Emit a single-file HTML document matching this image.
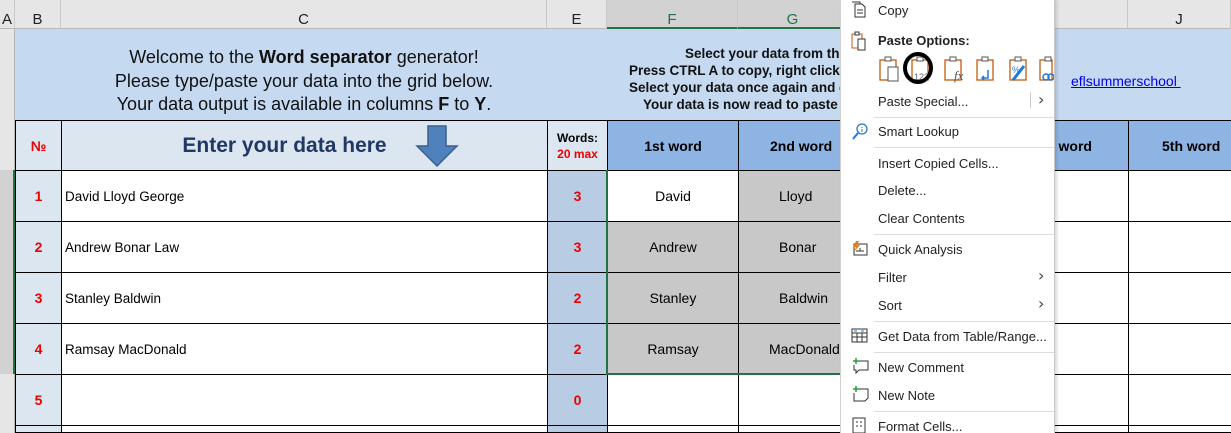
<!DOCTYPE html>
<html><head><style>
*{margin:0;padding:0;box-sizing:border-box}
html,body{width:1231px;height:433px;overflow:hidden}
body{background:#fff;font-family:"Liberation Sans",Arial,sans-serif;position:relative}
.a{position:absolute}
.hdr{background:#e6e6e6;color:#222;font-size:15px;text-align:center;top:0;height:29px;line-height:40px;border-right:1px solid #c8c8c8;border-bottom:1px solid #b8b8b8}
.c{position:absolute;border:1px solid #000;display:flex;align-items:center;justify-content:center}
.red{color:#e00;font-weight:bold;font-size:14px}
.nm{font-family:"Liberation Sans",sans-serif;font-size:13.5px;justify-content:flex-start;padding-left:3px}
.w{font-size:14px}
.mi{position:absolute;left:878px;font-family:"Liberation Sans",sans-serif;font-size:13px;color:#222}
.sep{position:absolute;left:874px;width:180px;height:1px;background:#ddd}
.chev{position:absolute;left:1038px;font-size:16px;color:#444;font-family:"DejaVu Sans",sans-serif}
.rt{position:absolute;font-size:13.5px;font-weight:bold;color:#111;white-space:nowrap}
</style></head><body>
<div class="a" style="left:0;top:0;width:1231px;height:10px;background:#e6e6e6"></div>
<div class="a hdr" style="left:0;width:15px">A</div>
<div class="a hdr" style="left:15px;width:46px">B</div>
<div class="a hdr" style="left:61px;width:486px">C</div>
<div class="a hdr" style="left:547px;width:60px">E</div>
<div class="a hdr" style="left:607px;width:131px;background:#d2d2d2;color:#217346;border-bottom:2px solid #217346">F</div>
<div class="a hdr" style="left:738px;width:110px;background:#d2d2d2;color:#217346;border-bottom:2px solid #217346">G</div>
<div class="a hdr" style="left:848px;width:280px">I</div>
<div class="a hdr" style="left:1128px;width:103px">J</div>
<div class="a" style="left:0;top:29px;width:15px;height:404px;background:#e6e6e6;border-right:1px solid #b8b8b8"></div>
<div class="a" style="left:0;top:170px;width:15px;height:204px;background:#d2d2d2;border-right:2px solid #217346"></div>
<div class="a" style="left:15px;top:29px;width:1216px;height:91px;background:#c5d9f1"></div>
<div class="a" style="left:40px;top:46px;width:528px;text-align:center;font-size:18px;line-height:23.5px;color:#111">Welcome to the <b>Word separator</b> generator!<br>Please type/paste your data into the grid below.<br>Your data output is available in columns <b>F</b> to <b>Y</b>.</div>
<div class="rt" style="left:685px;top:46px">Select your data from the clipboard</div>
<div class="rt" style="left:629px;top:63px">Press CTRL A to copy, right click, paste</div>
<div class="rt" style="left:629px;top:80px">Select your data once again and copy</div>
<div class="rt" style="left:643px;top:97px">Your data is now read to paste else</div>
<div class="a" style="left:1071px;top:73px;font-size:14px;color:#00e;text-decoration:underline">eflsummerschool&nbsp;</div>
<div class="c red" style="left:15px;top:120px;width:47px;height:51px;background:#dce6f1">№</div>
<div class="c" style="left:61px;top:120px;width:487px;height:51px;background:#dce6f1;color:#1f3864;font-weight:bold;font-size:21px;padding-right:40px">Enter your data here</div>
<svg class="a" style="left:415px;top:124px" width="46" height="44"><path d="M13 2h18v20h11L22 42 2 22h11z" fill="#4f81bd" stroke="#3a5f8f" stroke-width="1.5"/></svg>
<div class="c" style="left:547px;top:120px;width:61px;height:51px;background:#dce6f1;flex-direction:column;font-size:12px;font-weight:bold;line-height:16px"><span>Words:</span><span style="color:#e00">20 max</span></div>
<div class="c w" style="left:607px;top:120px;width:132px;height:51px;background:#8db4e2;font-weight:bold">1st word</div>
<div class="c w" style="left:738px;top:120px;width:120px;height:51px;background:#8db4e2;font-weight:bold;justify-content:flex-start;padding-left:31px">2nd word</div>
<div class="c w" style="left:1000px;top:120px;width:129px;height:51px;background:#8db4e2;font-weight:bold;justify-content:flex-end;padding-right:36px">word</div>
<div class="c w" style="left:1128px;top:120px;width:104px;height:51px;background:#8db4e2;font-weight:bold;justify-content:flex-start;padding-left:33px">5th word</div>
<div id="rows"></div>
<script>
var d=[["1","David Lloyd George","3","David","Lloyd"],["2","Andrew Bonar Law","3","Andrew","Bonar"],["3","Stanley Baldwin","2","Stanley","Baldwin"],["4","Ramsay MacDonald","2","Ramsay","MacDonald"],["5","","0","",""],["","","","",""]];
var h="";
d.forEach(function(r,i){var t=170+i*51;var hh=(i==5)?8:52;
h+='<div class="c red" style="left:15px;top:'+t+'px;width:47px;height:'+hh+'px;background:#dce6f1">'+r[0]+'</div>';
h+='<div class="c nm" style="left:61px;top:'+t+'px;width:487px;height:'+hh+'px">'+r[1]+'</div>';
h+='<div class="c red" style="left:547px;top:'+t+'px;width:61px;height:'+hh+'px;background:#b8cce4">'+r[2]+'</div>';
var g=(i<4);
h+='<div class="c w" style="left:607px;top:'+t+'px;width:132px;height:'+hh+'px;background:'+(g&&i>0?'#c8c8c8':'#fff')+'">'+r[3]+'</div>';
h+='<div class="c w" style="left:738px;top:'+t+'px;width:110px;height:'+hh+'px;background:'+(g?'#c8c8c8':'#fff')+';justify-content:flex-start;padding-left:'+(i==3?30:40)+'px">'+r[4]+'</div>';
h+='<div class="c" style="left:1000px;top:'+t+'px;width:129px;height:'+hh+'px"></div>';
h+='<div class="c" style="left:1128px;top:'+t+'px;width:104px;height:'+hh+'px"></div>';});
document.getElementById('rows').innerHTML=h;
</script>
<div class="a" style="left:606px;top:170px;width:2px;height:205px;background:#217346"></div>
<div class="a" style="left:606px;top:373px;width:234px;height:2px;background:#217346"></div>
<div class="a" style="left:840px;top:0;width:215px;height:433px;background:#fff;border-left:1px solid #d0d0d0;border-right:1px solid #c8c8c8;box-shadow:2px 0 3px rgba(0,0,0,.15)"></div>
<svg class="a" style="left:851px;top:1px" width="16" height="18"><path d="M4 3h7l3 3v10H4z M1 1h8v2" fill="none" stroke="#333"/><path d="M6 9h6M6 12h6" stroke="#333"/></svg>
<div class="mi" style="top:3px">Copy</div>
<svg class="a" style="left:851px;top:31px" width="16" height="20"><rect x="1" y="3" width="10" height="14" fill="none" stroke="#c55a11"/><rect x="4" y="1" width="4" height="3" fill="#fff" stroke="#333"/><rect x="7" y="8" width="7" height="11" fill="#fff" stroke="#333"/></svg>
<div class="mi" style="top:33px;font-weight:bold">Paste Options:</div>
<svg class="a" style="left:876px;top:50px" width="178" height="36"><g transform="translate(0,6)">
<g fill="#fff" stroke="#c55a11" stroke-width="1.3">
<rect x="4" y="4" width="16" height="20"/><rect x="36" y="4" width="16" height="20"/><rect x="69" y="4" width="16" height="20"/><rect x="101" y="4" width="16" height="20"/><rect x="134" y="4" width="16" height="20"/><rect x="164" y="4" width="12" height="20"/></g>
<g fill="#fff" stroke="#555"><rect x="9" y="1" width="6" height="4"/><rect x="41" y="1" width="6" height="4"/><rect x="74" y="1" width="6" height="4"/><rect x="106" y="1" width="6" height="4"/><rect x="139" y="1" width="6" height="4"/><rect x="169" y="1" width="6" height="4"/><rect x="12" y="11" width="10" height="14"/></g>
<text x="38" y="24" font-size="9" fill="#666" font-family="Liberation Sans">123</text>
<text x="78" y="24" font-size="13" font-style="italic" fill="#555" font-family="Liberation Serif">fx</text>
<path d="M112 14v8h-6m2-2l-2 2 2 2" stroke="#1e7ad6" fill="none" stroke-width="1.5"/>
<path d="M137 24l11-14" stroke="#1e7ad6" stroke-width="3"/><text x="136" y="17" font-size="9" fill="#1e7ad6">%</text>
<circle cx="170" cy="21" r="3" fill="none" stroke="#1e7ad6" stroke-width="1.5"/><circle cx="175" cy="21" r="3" fill="none" stroke="#1e7ad6" stroke-width="1.5"/>
<ellipse cx="42" cy="12" rx="13" ry="14" fill="none" stroke="#000" stroke-width="4"/>
</g></svg>
<div class="mi" style="top:94px">Paste Special...</div>
<div class="a" style="left:1030px;top:92px;width:1px;height:16px;background:#ccc"></div>
<div class="chev" style="top:90px">›</div>
<div class="sep" style="top:117px"></div>
<svg class="a" style="left:851px;top:122px" width="18" height="18"><circle cx="11" cy="7" r="5" fill="none" stroke="#1e7ad6" stroke-width="1.3"/><path d="M7 11l-5 6" stroke="#1e7ad6" stroke-width="2"/><path d="M11 5v1M11 7v3" stroke="#1e7ad6"/></svg>
<div class="mi" style="top:124px">Smart Lookup</div>
<div class="sep" style="top:147px"></div>
<div class="mi" style="top:156px">Insert Copied Cells...</div>
<div class="mi" style="top:183px">Delete...</div>
<div class="mi" style="top:211px">Clear Contents</div>
<div class="sep" style="top:234px"></div>
<svg class="a" style="left:851px;top:240px" width="18" height="18"><rect x="3" y="4" width="13" height="11" fill="none" stroke="#333"/><path d="M5 11h8M9 8v3" stroke="#333"/><path d="M5 1l-3 6h3l-2 5 6-7H6l2-4z" fill="#e8801a"/></svg>
<div class="mi" style="top:242px">Quick Analysis</div>
<div class="mi" style="top:270px">Filter</div><div class="chev" style="top:266px">›</div>
<div class="mi" style="top:298px">Sort</div><div class="chev" style="top:294px">›</div>
<div class="sep" style="top:321px"></div>
<svg class="a" style="left:851px;top:328px" width="18" height="16"><rect x="1" y="1" width="15" height="13" fill="none" stroke="#333"/><path d="M1 5h15M1 9h15M6 5v9M11 5v9" stroke="#333"/><path d="M3 3h3M10 3h3" stroke="#1e7ad6"/></svg>
<div class="mi" style="top:329px">Get Data from Table/Range...</div>
<div class="sep" style="top:352px"></div>
<svg class="a" style="left:852px;top:357px" width="18" height="18"><path d="M6 4h10v9H7l-3 3v-3H2V8" fill="none" stroke="#333"/><path d="M4 1v6M1 4h6" stroke="#2a9d3a" stroke-width="1.5"/></svg>
<div class="mi" style="top:360px">New Comment</div>
<svg class="a" style="left:852px;top:385px" width="18" height="18"><path d="M6 4h10v9l-3 3H2V8" fill="none" stroke="#333"/><path d="M4 1v6M1 4h6" stroke="#2a9d3a" stroke-width="1.5"/></svg>
<div class="mi" style="top:388px">New Note</div>
<div class="sep" style="top:411px"></div>
<svg class="a" style="left:852px;top:417px" width="14" height="16"><rect x="1" y="1" width="12" height="15" fill="none" stroke="#333"/><path d="M4 5h2M8 5h2M4 9h2M8 9h2" stroke="#333"/></svg>
<div class="mi" style="top:419px">Format Cells...</div>
</body></html>
